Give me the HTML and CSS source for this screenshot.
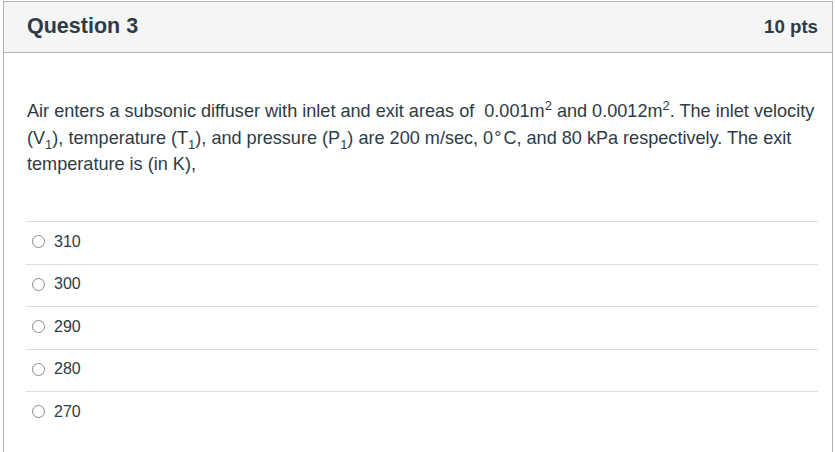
FILE: index.html
```html
<!DOCTYPE html>
<html>
<head>
<meta charset="utf-8">
<link rel="stylesheet" href="styles.css">
</head>
<body>
<div class="question">
  <div class="q-header">
    <h2 class="q-title">Question 3</h2>
    <div class="q-points">10 pts</div>
  </div>
  <div class="q-body">
    <p class="q-text">Air enters a subsonic diffuser with inlet and exit areas of &nbsp;0.001m<sup>2</sup> and 0.0012m<sup>2</sup>. The inlet velocity (V<sub>1</sub>), temperature (T<sub>1</sub>), and pressure (P<sub>1</sub>) are 200 m/sec, 0<sup class="deg">°</sup>C, and 80 kPa respectively. The exit temperature is (in K),</p>
    <div class="answers">
      <label class="answer"><span class="radio"></span><span class="answer-label">310</span></label>
      <label class="answer"><span class="radio"></span><span class="answer-label">300</span></label>
      <label class="answer"><span class="radio"></span><span class="answer-label">290</span></label>
      <label class="answer"><span class="radio"></span><span class="answer-label">280</span></label>
      <label class="answer"><span class="radio"></span><span class="answer-label">270</span></label>
    </div>
  </div>
</div>
</body>
</html>
```
FILE: styles.css
```css
html, body {
  margin: 0;
  padding: 0;
  background: #ffffff;
}
body {
  font-family: "Liberation Sans", Arial, sans-serif;
  color: #2d3b45;
  overflow: hidden;
}
.question {
  margin: 1px 2px 0 3px;
  border: 1px solid #b2b2b2;
  border-bottom: none;
  height: 460px;
}
.q-header {
  display: flex;
  align-items: center;
  justify-content: space-between;
  height: 50px;
  background: #f5f5f5;
  border-bottom: 1px solid #b2b2b2;
  padding: 0 14px 0 23px;
}
.q-title {
  margin: 0;
  font-size: 21.5px;
  font-weight: bold;
  line-height: 1;
}
.q-points {
  font-size: 18.7px;
  font-weight: bold;
  line-height: 1;
  padding-top: 1px;
}
.q-body {
  padding: 45px 14px 0 22px;
}
.q-text {
  margin: 0 -8px 0 1px;
  font-size: 18.1px;
  line-height: 26.5px;
}
.q-text sup {
  font-size: 13px;
  line-height: 0;
}
.q-text sup.deg {
  font-size: 18px;
  vertical-align: baseline;
  padding-left: 1px;
  padding-right: 2px;
}
.q-text sub {
  font-size: 13px;
  line-height: 0;
}
.answers {
  margin-top: 43.5px;
}
.answer {
  display: flex;
  align-items: center;
  height: 39px;
  padding-bottom: 2.5px;
  border-top: 1px solid #dcdcdc;
  padding-left: 6px;
  font-size: 16px;
}
.radio {
  width: 11px;
  height: 11px;
  border: 1px solid #8a8a8a;
  border-radius: 50%;
  margin-right: 9px;
  background: #fff;
}
```
